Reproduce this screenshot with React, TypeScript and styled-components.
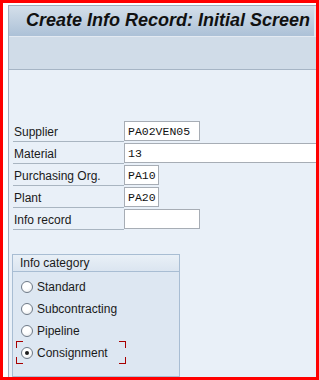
import React from 'react'
import styled, { createGlobalStyle, css } from 'styled-components'

const GlobalStyle = createGlobalStyle`
  html, body { margin: 0; padding: 0; background: #fff; }
  body { font-family: "Liberation Sans", Arial, sans-serif; }
`

type Corner = 'tl' | 'tr' | 'bl' | 'br'

const fields = [
  { label: 'Supplier', value: 'PA02VEN05', width: 76 },
  { label: 'Material', value: '13', width: 220 },
  { label: 'Purchasing Org.', value: 'PA10', width: 35 },
  { label: 'Plant', value: 'PA20', width: 35 },
  { label: 'Info record', value: '', width: 76 },
]

const options = [
  { label: 'Standard', checked: false },
  { label: 'Subcontracting', checked: false },
  { label: 'Pipeline', checked: false },
  { label: 'Consignment', checked: true },
]

const App = () => {
  return (
    <>
      <GlobalStyle />
      <Frame>
        <Window>
          <TitleBar>Create Info Record: Initial Screen</TitleBar>
          <Toolbar />
          <Content>
            <Form>
              {fields.map((f) => (
                <Row key={f.label}>
                  <Label>{f.label}</Label>
                  <Field $width={f.width}>{f.value}</Field>
                </Row>
              ))}
            </Form>
            <Group>
              <GroupHeader>Info category</GroupHeader>
              <OptionList>
                {options.map((o) => (
                  <Option key={o.label}>
                    <Radio $checked={o.checked} />
                    {o.label}
                    {o.checked &&
                      (['tl', 'tr', 'bl', 'br'] as Corner[]).map((c) => (
                        <FocusCorner key={c} $pos={c} />
                      ))}
                  </Option>
                ))}
              </OptionList>
            </Group>
          </Content>
        </Window>
      </Frame>
    </>
  )
}

export default App

const Frame = styled.div`
  width: 319px;
  height: 380px;
  box-sizing: border-box;
  border: 3px solid #ff0000;
  background: #fff;
  padding: 2px 0 0 5px;
  overflow: hidden;
`
const Window = styled.div`
  height: 100%;
  display: flex;
  flex-direction: column;
  border-left: 1px solid #9fadbd;
  border-top: 1px solid #9fadbd;
  box-sizing: border-box;
`
const TitleBar = styled.div`
  height: 30px;
  flex-shrink: 0;
  display: flex;
  align-items: center;
  padding: 0 0 2px 17px;
  box-sizing: border-box;
  background: linear-gradient(#d4dfea, #acc1d7);
  border-right: 2px solid #dde6ef;
  font-family: "Liberation Sans", Arial, sans-serif;
  font-weight: 700;
  font-style: italic;
  font-size: 18px;
  color: #111;
  white-space: nowrap;
`
const Toolbar = styled.div`
  height: 34px;
  flex-shrink: 0;
  box-sizing: border-box;
  background: #d0dce8;
  border-top: 1px solid #e3eaf2;
  border-bottom: 1px solid #a6b5c5;
`
const Content = styled.div`
  flex: 1;
  background: #e9f0f8;
  padding: 50px 0 0 4px;
  overflow: hidden;
  display: flex;
  flex-direction: column;
`
const Form = styled.div`
  display: flex;
  flex-direction: column;
`
const Row = styled.div`
  display: flex;
  align-items: flex-end;
  height: 22px;
`
const Label = styled.div`
  width: 111px;
  height: 22px;
  flex-shrink: 0;
  box-sizing: border-box;
  border-bottom: 1px solid #a9b5c1;
  display: flex;
  align-items: center;
  padding: 3px 0 0 1px;
  font-size: 12px;
  color: #1a1a1a;
`
const Field = styled.div<{ $width: number }>`
  width: ${(p) => p.$width}px;
  height: 20px;
  flex-shrink: 0;
  box-sizing: border-box;
  margin-bottom: 1px;
  border: 1px solid #a7adb5;
  background: #fff;
  display: flex;
  align-items: center;
  padding-left: 3px;
  font-family: "Liberation Mono", "Courier New", monospace;
  font-size: 11.5px;
  color: #111;
`
const Group = styled.div`
  margin: 24px 0 0 -1px;
  width: 168px;
  flex: 1;
  box-sizing: border-box;
  border: 1px solid #a8bdd3;
  background: #dde7f2;
`
const GroupHeader = styled.div`
  height: 16px;
  box-sizing: content-box;
  border-bottom: 1px solid #a8bdd3;
  background: linear-gradient(#e9f0f7, #dbe5f0);
  padding-left: 7px;
  display: flex;
  align-items: center;
  font-size: 12px;
  color: #1a1a1a;
`
const OptionList = styled.div`
  padding-top: 4px;
  display: flex;
  flex-direction: column;
`
const Option = styled.div`
  position: relative;
  width: 110px;
  height: 22px;
  margin-left: 3px;
  padding-left: 5px;
  box-sizing: border-box;
  display: flex;
  align-items: center;
  gap: 4px;
  font-size: 12px;
  color: #1a1a1a;
`
const Radio = styled.span<{ $checked: boolean }>`
  width: 12px;
  height: 12px;
  box-sizing: border-box;
  border-radius: 50%;
  border: 1px solid #6f7a87;
  background: radial-gradient(circle at 40% 35%, #ffffff 40%, #dfe3e8 100%);
  display: flex;
  align-items: center;
  justify-content: center;
  flex-shrink: 0;
  &::after {
    content: '';
    width: 4px;
    height: 4px;
    border-radius: 50%;
    background: ${(p) => (p.$checked ? '#1e1e1e' : 'transparent')};
  }
`
const cornerStyles: Record<Corner, ReturnType<typeof css>> = {
  tl: css`top: -1px; left: 0; border-top: 1px solid; border-left: 1px solid;`,
  tr: css`top: -1px; right: 0; border-top: 1px solid; border-right: 1px solid;`,
  bl: css`bottom: 0; left: 0; border-bottom: 1px solid; border-left: 1px solid;`,
  br: css`bottom: 0; right: 0; border-bottom: 1px solid; border-right: 1px solid;`,
}
const FocusCorner = styled.span<{ $pos: Corner }>`
  position: absolute;
  width: 6px;
  height: 6px;
  color: #a80000;
  ${(p) => cornerStyles[p.$pos]}
`
